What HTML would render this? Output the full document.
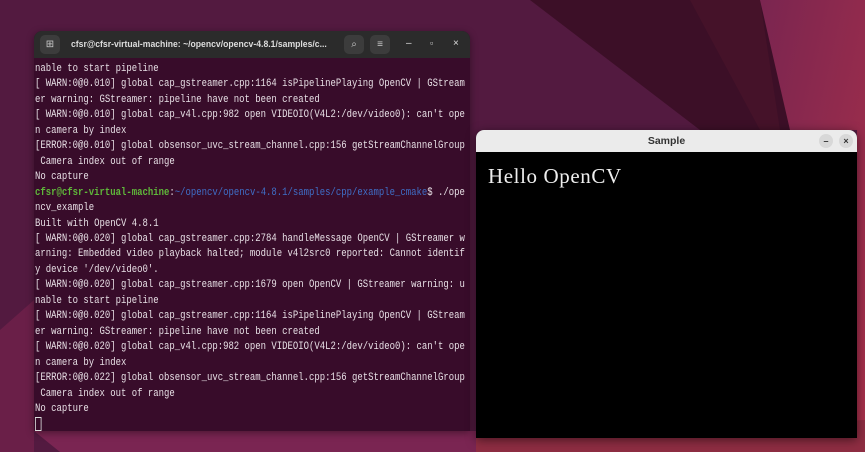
<!DOCTYPE html>
<html><head><meta charset="utf-8"><style>
*{margin:0;padding:0;box-sizing:border-box}
body{width:865px;height:452px;overflow:hidden;position:relative;background:#4a1435;font-family:"Liberation Sans",sans-serif}
.bg{position:absolute;left:0;top:0}
.term{position:absolute;left:34px;top:31px;width:436px;height:400px;background:#380c2a;border-radius:8px 8px 0 0;overflow:hidden;box-shadow:0 2px 8px rgba(0,0,0,.4)}
.tbar{height:27px;background:#2b2b2b;position:relative;color:#ddd;font-size:10px}
.tbar .t{position:absolute;left:37px;top:8px;font-weight:bold;color:#ddd;white-space:nowrap;font-size:9.6px;transform:scaleX(.9);transform-origin:left}
.btn{position:absolute;top:4px;width:20px;height:19px;border-radius:5px;background:#3c3c3c;text-align:center;line-height:19px;color:#ccc}
.pre{position:absolute;left:1px;top:31px;font-family:"Liberation Mono",monospace;font-size:11px;line-height:15.45px;color:#e8e0e6;white-space:pre;transform:scaleX(.814);transform-origin:left top}
.g{color:#5fb83a;font-weight:bold}.b{color:#3f6fc8}
.samp{position:absolute;left:476px;top:130px;width:381px;height:308px;background:#000;border-radius:8px 8px 0 0;overflow:hidden;box-shadow:0 2px 10px rgba(0,0,0,.5)}
.sbar{height:22px;background:#ebebeb;position:relative;text-align:center;font-size:10.5px;font-weight:bold;color:#333;line-height:22px}
.c{position:absolute;top:4px;width:14px;height:14px;border-radius:50%;background:#d8d8d8;font-size:9px;line-height:14px;color:#333}
.hello{position:absolute;left:12px;top:34px;color:#eee;font-family:"Liberation Serif",serif;font-size:21px;letter-spacing:.6px}
</style></head><body>
<svg class="bg" width="865" height="452">
<defs><linearGradient id="r" x1="0" y1="0" x2="1" y2="1"><stop offset="0" stop-color="#7a2550"/><stop offset="1" stop-color="#a8304a"/></linearGradient></defs>
<rect width="865" height="452" fill="#531a40"/>
<polygon points="530,0 760,0 820,130 700,130" fill="#3c0f27"/>
<polygon points="690,0 760,0 780,130 760,130" fill="#451229"/>
<polygon points="760,0 865,0 865,452 857,452 857,130 790,130" fill="url(#r)"/>
<polygon points="0,330 34,300 34,452 0,452" fill="#6a1f48"/>
<polygon points="34,431 476,431 476,452 60,452" fill="#7a2552"/>
<polygon points="476,438 865,420 865,452 476,452" fill="#8e2d42"/>
</svg>
<div class="term">
<div class="tbar">
<div class="btn" style="left:6px">⊞</div>
<div class="t">cfsr@cfsr-virtual-machine: ~/opencv/opencv-4.8.1/samples/c...</div>
<div class="btn" style="left:310px">⌕</div>
<div class="btn" style="left:336px">≡</div>
<span style="position:absolute;left:372px;top:7px">–</span>
<span style="position:absolute;left:396px;top:7px;font-size:9px">▫</span>
<span style="position:absolute;left:419px;top:7px">×</span>
</div>
<div class="pre">nable to start pipeline
[ WARN:0@0.010] global cap_gstreamer.cpp:1164 isPipelinePlaying OpenCV | GStream
er warning: GStreamer: pipeline have not been created
[ WARN:0@0.010] global cap_v4l.cpp:982 open VIDEOIO(V4L2:/dev/video0): can't ope
n camera by index
[ERROR:0@0.010] global obsensor_uvc_stream_channel.cpp:156 getStreamChannelGroup
 Camera index out of range
No capture
<span class="g">cfsr@cfsr-virtual-machine</span>:<span class="b">~/opencv/opencv-4.8.1/samples/cpp/example_cmake</span>$ ./ope
ncv_example
Built with OpenCV 4.8.1
[ WARN:0@0.020] global cap_gstreamer.cpp:2784 handleMessage OpenCV | GStreamer w
arning: Embedded video playback halted; module v4l2src0 reported: Cannot identif
y device '/dev/video0'.
[ WARN:0@0.020] global cap_gstreamer.cpp:1679 open OpenCV | GStreamer warning: u
nable to start pipeline
[ WARN:0@0.020] global cap_gstreamer.cpp:1164 isPipelinePlaying OpenCV | GStream
er warning: GStreamer: pipeline have not been created
[ WARN:0@0.020] global cap_v4l.cpp:982 open VIDEOIO(V4L2:/dev/video0): can't ope
n camera by index
[ERROR:0@0.022] global obsensor_uvc_stream_channel.cpp:156 getStreamChannelGroup
 Camera index out of range
No capture
<span style="display:inline-block;width:8px;height:14px;border:1px solid #ddd;vertical-align:middle"></span></div>
</div>
<div class="samp">
<div class="sbar">Sample
<div class="c" style="left:343px">–</div><div class="c" style="left:363px">×</div></div>
<div class="hello">Hello OpenCV</div>
</div>
</body></html>
